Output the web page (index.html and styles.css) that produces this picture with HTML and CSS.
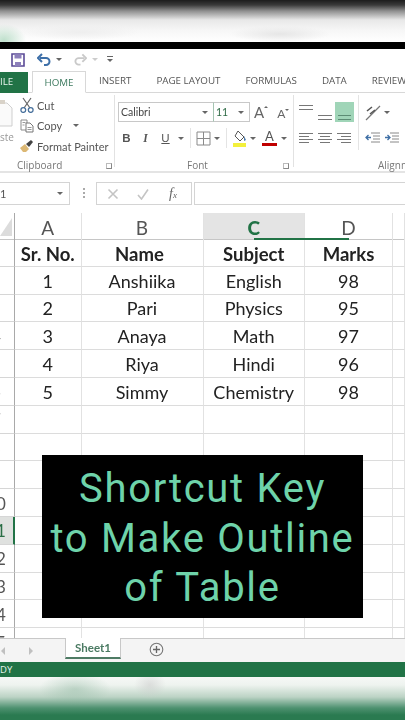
FILE: index.html
```html
<!DOCTYPE html>
<html lang="en">
<head>
<meta charset="utf-8">
<title>Shortcut Key to Make Outline of Table</title>
<link rel="stylesheet" href="styles.css">
</head>
<body>
<div class="page">
  <div class="blur-top"></div>
  <div class="black-bar"></div>
  <div class="app">
    <div class="qat">
      <svg class="q-save" width="14" height="14" viewBox="0 0 14 14"><path d="M1 1h12v12H1z" fill="none" stroke="#5a4a96" stroke-width="1.6"/><path d="M3.5 1.5h7v4h-7zM4 9h6v4H4z" fill="#8d80bb"/></svg>
      <svg class="q-undo" width="14" height="13" viewBox="0 0 14 13"><path d="M3 5h6a3.5 3.5 0 0 1 0 7H7" fill="none" stroke="#3d6fa8" stroke-width="2"/><path d="M5 1 1 5l4 4" fill="none" stroke="#3d6fa8" stroke-width="2"/></svg>
      <span class="caret q-c1"></span>
      <svg class="q-redo" width="13" height="13" viewBox="0 0 14 13"><path d="M11 5H5a3.5 3.5 0 0 0 0 7h2" fill="none" stroke="#c9c9c9" stroke-width="2"/><path d="m9 1 4 4-4 4" fill="none" stroke="#c9c9c9" stroke-width="2"/></svg>
      <span class="caret pale q-c2"></span>
      <span class="custom"></span>
    </div>
    <div class="tabs">
      <div class="file-tab">ILE</div>
      <div class="tab active">HOME</div>
      <div class="tab t-insert">INSERT</div>
      <div class="tab t-page">PAGE LAYOUT</div>
      <div class="tab t-form">FORMULAS</div>
      <div class="tab t-data">DATA</div>
      <div class="tab t-rev">REVIEW</div>
    </div>
    <div class="ribbon">
      <section class="group g-clip">
        <div class="clip-body">
          <div class="paste">
            <svg width="13" height="28" viewBox="0 0 13 28"><path d="M-3 4h10l5 5v18H-3z" fill="#fafafa" stroke="#cfcfcf"/><path d="M0 1h5v4H0z" fill="#d8d2c8"/></svg>
            <span class="paste-label">ste</span>
          </div>
          <div class="clip-cmds">
            <div class="cmd"><svg width="14" height="16" viewBox="0 0 14 16"><path d="M3 1l7 10M11 1 4 11" stroke="#666" stroke-width="1.2" fill="none"/><circle cx="3.3" cy="13" r="2.4" fill="none" stroke="#47709c" stroke-width="1.3"/><circle cx="10.7" cy="13" r="2.4" fill="none" stroke="#47709c" stroke-width="1.3"/></svg><span>Cut</span></div>
            <div class="cmd"><svg width="14" height="14" viewBox="0 0 14 14"><path d="M1 1h6v10H1z" fill="#fff" stroke="#8a8a8a"/><path d="M6 4h4l3 3v6H6z" fill="#fff" stroke="#777"/><path d="M2.5 3.5h3M2.5 6h2M7.5 8.500h4M7.500 10.500h4" stroke="#999"/></svg><span>Copy</span><span class="caret c-copy"></span></div>
            <div class="cmd"><svg width="14" height="14" viewBox="0 0 14 14"><path d="M0 9l5-4 4 5-3 3H3z" fill="#dcb874"/><path d="M6 5l5-4 2 2-4 5z" fill="#444"/></svg><span>Format Painter</span></div>
          </div>
        </div>
        <div class="g-label clip-label"><span>Clipboard</span><span class="launch"></span></div>
      </section>
      <section class="group g-font">
        <div class="font-rows">
          <div class="font-row1">
            <div class="combo c-name"><span>Calibri</span><span class="caret"></span></div>
            <div class="combo c-size"><span>11</span><span class="caret"></span></div>
            <span class="size-a big">A<i></i></span>
            <span class="size-a small">A<i class="down"></i></span>
          </div>
          <div class="font-row2">
            <b class="fmt f-b">B</b>
            <i class="fmt f-i">I</i>
            <u class="fmt f-u">U</u>
            <span class="caret f-c1"></span>
            <span class="vsep s1"></span>
            <svg class="f-border" width="15" height="15" viewBox="0 0 15 15"><path d="M1 1h13v13H1zM7.500 1v13M1 7.500h13" fill="none" stroke="#8a8a8a"/></svg>
            <span class="caret f-c2"></span>
            <span class="vsep s2"></span>
            <svg class="f-fill" width="15" height="17" viewBox="0 0 15 17"><path d="M6 1l6 6-4 4-5-5z" fill="#fff" stroke="#555"/><path d="M12 6l2 4-2 1z" fill="#4a78a8"/><path d="M1 13h13v4H1z" fill="#f3f03c"/></svg>
            <span class="caret f-c3"></span>
            <span class="color-a">A</span>
            <span class="caret f-c4"></span>
          </div>
        </div>
        <div class="g-label font-label"><span>Font</span><span class="launch"></span></div>
      </section>
      <section class="group g-align">
        <div class="align-body">
          <div class="align-grid">
            <span class="lines va-top"><i></i><i></i></span>
            <span class="lines va-mid"><i></i><i></i></span>
            <span class="lines va-bot"><i></i><i></i></span>
            <span class="lines ha"><i></i><i class="s"></i><i></i><i class="s"></i></span>
            <span class="lines ha ctr"><i></i><i class="s"></i><i></i><i class="s"></i></span>
            <span class="lines ha rgt"><i></i><i class="s"></i><i></i><i class="s"></i></span>
          </div>
          <div class="align-tools">
            <div class="orient"><svg width="16" height="17" viewBox="0 0 16 17"><path d="M1 16 15 2" stroke="#777" stroke-width="1.2"/><path d="M2 7l5-4M5 10l5-4" stroke="#555" stroke-width="1.6"/></svg><span class="caret"></span></div>
            <div class="indent">
              <svg width="15" height="12" viewBox="0 0 15 12"><path d="M6 1h9M8 4h7M8 7h7M6 10h9" stroke="#888"/><path d="M6 5.500H1M3.500 3 1 5.500 3.500 8" stroke="#3f6fa5" stroke-width="1.300" fill="none"/></svg>
              <svg width="15" height="12" viewBox="0 0 15 12"><path d="M6 1h9M8 4h7M8 7h7M6 10h9" stroke="#888"/><path d="M1 5.500h5M3.500 3 6 5.500 3.500 8" stroke="#3f6fa5" stroke-width="1.300" fill="none"/></svg>
            </div>
          </div>
        </div>
        <div class="g-label align-label">Alignm</div>
      </section>
    </div>
    <div class="formula">
      <div class="namebox"><span>1</span><span class="caret"></span></div>
      <span class="dots"></span>
      <div class="fx-box">
        <svg width="12" height="12" viewBox="0 0 12 12"><path d="M1.500 1.500l9 9M10.500 1.500l-9 9" stroke="#c4c4c4" stroke-width="1.600"/></svg>
        <svg width="12" height="12" viewBox="0 0 12 12"><path d="M1 7l3.500 4L11 1.500" stroke="#c4c4c4" stroke-width="1.600" fill="none"/></svg>
        <span class="fx">f<small>x</small></span>
      </div>
      <div class="input"></div>
    </div>
    <div class="sheet">
      <div class="row head">
        <div class="corner"><span></span></div>
        <div class="col">A</div><div class="col">B</div><div class="col sel">C</div><div class="col">D</div><div class="col"></div>
      </div>
      <div class="row titles"><div class="rh"><span>1</span></div><div>Sr. No.</div><div class="nudge">Name</div><div>Subject</div><div>Marks</div><div></div></div>
      <div class="row"><div class="rh"><span>2</span></div><div>1</div><div>Anshiika</div><div>English</div><div>98</div><div></div></div>
      <div class="row"><div class="rh"><span>3</span></div><div>2</div><div>Pari</div><div>Physics</div><div>95</div><div></div></div>
      <div class="row"><div class="rh"><span>4</span></div><div>3</div><div>Anaya</div><div>Math</div><div>97</div><div></div></div>
      <div class="row"><div class="rh"><span>5</span></div><div>4</div><div>Riya</div><div>Hindi</div><div>96</div><div></div></div>
      <div class="row"><div class="rh"><span>6</span></div><div>5</div><div>Simmy</div><div>Chemistry</div><div>98</div><div></div></div>
      <div class="row"><div class="rh"><span>7</span></div><div></div><div></div><div></div><div></div><div></div></div>
      <div class="row"><div class="rh"><span>8</span></div><div></div><div></div><div></div><div></div><div></div></div>
      <div class="row"><div class="rh"><span>9</span></div><div></div><div></div><div></div><div></div><div></div></div>
      <div class="row"><div class="rh"><span>10</span></div><div></div><div></div><div></div><div></div><div></div></div>
      <div class="row"><div class="rh cur"><span>11</span></div><div></div><div></div><div></div><div></div><div></div></div>
      <div class="row"><div class="rh"><span>12</span></div><div></div><div></div><div></div><div></div><div></div></div>
      <div class="row"><div class="rh"><span>13</span></div><div></div><div></div><div></div><div></div><div></div></div>
      <div class="row"><div class="rh"><span>14</span></div><div></div><div></div><div></div><div></div><div></div></div>
      <div class="row"><div class="rh"><span>15</span></div><div></div><div></div><div></div><div></div><div></div></div>
      <div class="green-mark"></div>
    </div>
    <div class="sheet-tabs">
      <span class="nav n1"></span>
      <span class="nav n2"></span>
      <div class="sheet-tab">Sheet1</div>
      <svg class="add" width="15" height="15" viewBox="0 0 15 15"><circle cx="7.500" cy="7.500" r="6.300" fill="none" stroke="#777" stroke-width="1.100"/><path d="M7.500 4v7M4 7.500h7" stroke="#666" stroke-width="1.300"/></svg>
    </div>
    <div class="status">DY</div>
  </div>
  <div class="blur-bottom"></div>
  <div class="title-card">Shortcut Key<br>to Make Outline<br>of Table</div>
</div>
</body>
</html>
```
FILE: styles.css
```css
* { box-sizing: border-box; }
html, body { margin: 0; padding: 0; background: #fff; }
.page {
  position: relative;
  width: 405px;
  height: 720px;
  overflow: hidden;
  display: flex;
  flex-direction: column;
  font-family: "Open Sans", "Liberation Sans", sans-serif;
  color: #444;
}
.blur-top {
  height: 42px;
  flex: none;
  background:
    radial-gradient(ellipse 22px 16px at 4px 40px, #bfe0cc 0%, rgba(255,255,255,0) 100%),
    radial-gradient(ellipse 60px 8px at 80px 32px, #eeeeee 0%, rgba(255,255,255,0) 100%),
    radial-gradient(ellipse 50px 8px at 280px 34px, #e6e6e6 0%, rgba(255,255,255,0) 100%),
    linear-gradient(#1c1c1c 0, #3a3a3a 5px, #8f8f8f 11px, #e8e8e8 20px, #f6f6f6 30px, #ffffff 42px);
}
.black-bar { height: 7px; flex: none; background: #000; }
.app { height: 628px; flex: none; display: flex; flex-direction: column; background: #fff; filter: blur(0.35px); }

/* Quick access */
.qat { height: 21px; flex: none; display: flex; align-items: center; }
.q-save { margin-left: 11px; }
.q-undo { margin-left: 12px; }
.q-c1 { margin-left: 5px; }
.q-redo { margin-left: 12px; }
.q-c2 { margin-left: 5px; }
.custom { margin-left: 9px; width: 6px; height: 7px; border-top: 1px solid #666; }
.custom::after { content: ""; display: block; margin-top: 2px; width: 0; border: 3px solid transparent; border-top-color: #666; border-bottom: 0; }
.caret { display: inline-block; width: 0; height: 0; border: 3px solid transparent; border-top-color: #666; border-bottom: 0; flex: none; }
.caret.pale { border-top-color: #ccc; }

/* Tabs */
.tabs { height: 23px; flex: none; display: flex; align-items: flex-end; border-bottom: 1px solid #d8d8d8; font-size: 9.800px; color: #555; }
.file-tab { width: 28px; height: 21px; flex: none; background: #217346; color: #e8f3ec; margin-bottom: -1px; line-height: 20px; }
.tab { height: 22px; line-height: 21px; white-space: nowrap; flex: none; }
.tab.active { width: 54px; margin-left: 4px; border: 1px solid #d8d8d8; border-bottom: 1px solid #fff; margin-bottom: -1px; text-align: center; color: #3d7a5f; background: #fff; }
.t-insert { margin-left: 13px; }
.t-page { margin-left: 25px; }
.t-form { margin-left: 25px; }
.t-data { margin-left: 25px; }
.t-rev { margin-left: 25px; }

/* Ribbon */
.ribbon { height: 80px; flex: none; display: flex; border-bottom: 2px solid #e4e4e4; }
.group { display: flex; flex-direction: column; flex: none; margin: 2px 0 4px; }
.g-clip { width: 115px; border-right: 1px solid #e2e2e2; }
.g-font { width: 179px; border-right: 1px solid #e2e2e2; }
.g-align { flex: 1; min-width: 0; }
.clip-body { flex: 1; display: flex; }
.paste { width: 20px; display: flex; flex-direction: column; padding-top: 4px; flex: none; }
.paste-label { font-size: 10px; color: #999; line-height: 14px; margin-top: 3px; }
.paste svg { display: block; }
.clip-cmds { display: flex; flex-direction: column; }
.cmd { height: 20.500px; display: flex; align-items: center; gap: 3px; font-family: "Lato", sans-serif; font-size: 11px; color: #555; white-space: nowrap; }
.c-copy { margin-left: 8px; }
.g-label { height: 15px; font-size: 10px; line-height: 15px; color: #777; flex: none; display: flex; align-items: center; margin-bottom: -6px; }
.clip-label { padding-left: 17px; gap: 44px; }
.launch { width: 6px; height: 6px; border: 1px solid #888; border-top-color: #bbb; border-left-color: #bbb; flex: none; }

/* Font group */
.font-rows { flex: 1; padding: 7px 0 0 3px; }
.font-row1 { display: flex; align-items: center; height: 20px; }
.combo { height: 20px; border: 1px solid #c8c8c8; display: flex; align-items: center; justify-content: space-between; padding: 0 5px 0 2px; font-size: 10.500px; color: #444; flex: none; font-family: "Lato", sans-serif; }
.c-name { width: 96px; }
.c-size { width: 37px; margin-left: -1px; border-left-color: #a5c5b2; color: #2d6a45; }
.size-a { font-family: "Lato", sans-serif; color: #666; display: inline-flex; align-items: flex-start; flex: none; }
.size-a i { display: block; border: 2px solid transparent; border-bottom-color: #666; border-top: 0; margin-top: 3px; }
.size-a i.down { border-bottom: 0; border-top: 2px solid #666; }
.size-a.big { font-size: 15px; margin-left: 4px; }
.size-a.small { font-size: 12px; margin-left: 9px; padding-top: 2px; }
.font-row2 { display: flex; align-items: center; height: 24px; margin-top: 4px; padding-left: 4px; }
.fmt { font-size: 11.500px; font-family: "Liberation Sans", sans-serif; color: #555; width: 9px; text-align: center; flex: none; }
.f-i { margin-left: 10px; font-family: "Liberation Serif", serif; font-weight: 700; }
.f-u { margin-left: 11px; }
.f-c1 { margin-left: 8px; }
.vsep { width: 1px; height: 20px; background: #e4e4e4; flex: none; }
.s1 { margin-left: 6px; }
.f-border { margin-left: 5px; }
.f-c2 { margin-left: 3px; }
.s2 { margin-left: 6px; }
.f-fill { margin-left: 5px; }
.f-c3 { margin-left: 3px; }
.color-a { margin-left: 6px; width: 15px; border-bottom: 3px solid #c00000; font-family: "Lato", sans-serif; font-size: 13px; line-height: 13px; text-align: center; color: #555; flex: none; }
.f-c4 { margin-left: 4px; }
.font-label { padding-left: 72px; gap: 75px; }

/* Alignment */
.align-body { flex: 1; display: flex; }
.align-grid { width: 65px; display: grid; grid-template-columns: 19px 19px 19px; grid-template-rows: 26px 20px; padding: 7px 0 0 5px; border-right: 1px solid #e4e4e4; margin-bottom: 8px; flex: none; }
.lines { display: flex; flex-direction: column; gap: 2px; width: 14px; align-items: flex-start; justify-content: center; }
.lines i { display: block; width: 14px; height: 1px; background: #777; }
.lines i.s { width: 10px; }
.lines.ctr { align-items: center; }
.lines.rgt { align-items: flex-end; }
.va-top { justify-content: flex-start; padding-top: 3px; gap: 3px; }
.va-mid { justify-content: center; padding-top: 5px; gap: 3px; }
.va-bot { width: 19px; margin-left: -2px; height: 20px; justify-content: flex-end; padding: 0 3px 2px; gap: 3px; background: #a0d5b8; }
.va-bot i { width: 13px; background: #5c8c74; }
.align-tools { display: flex; flex-direction: column; padding: 7px 0 0 6px; }
.orient { display: flex; align-items: center; gap: 3px; height: 20px; }
.indent { display: flex; gap: 4px; margin-top: 10px; }
.align-label { padding-left: 84px; white-space: nowrap; }

/* Formula bar */
.formula { height: 40px; flex: none; display: flex; padding-top: 9px; align-items: flex-start; }
.namebox { width: 70px; height: 23px; border: 1px solid #d4d4d4; border-left: 0; display: flex; align-items: center; justify-content: space-between; padding: 0 6px 0 0; font-size: 11px; color: #555; flex: none; font-family: "Lato", sans-serif; }
.dots { width: 2px; height: 10px; margin: 6px 0 0 13px; background: repeating-linear-gradient(#aaa 0 2px, transparent 2px 4px); flex: none; }
.fx-box { width: 96px; height: 23px; margin-left: 11px; border: 1px solid #d4d4d4; display: flex; align-items: center; padding-left: 10px; flex: none; }
.fx-box svg + svg { margin-left: 18px; }
.fx { margin-left: 20px; font-family: "Liberation Serif", serif; font-style: italic; font-size: 14px; color: #666; }
.fx small { font-size: 9px; }
.input { flex: 1; height: 23px; margin-left: 2px; border: 1px solid #d4d4d4; border-right: 0; }

/* Sheet */
.sheet { position: relative; height: 425px; flex: none; overflow: hidden; font-family: "Lato", sans-serif; font-size: 18px; color: #222; }
.row { display: grid; grid-template-columns: 15px 66.500px 122px 101.500px 88px 1fr; height: 27.800px; }
.row > div { border-right: 1px solid #e2e2e2; border-bottom: 1px solid #dcdcdc; display: flex; align-items: center; justify-content: center; white-space: nowrap; min-width: 0; padding-top: 1px; }
.titles { font-weight: 700; font-size: 18.500px; }
.row.titles > div { padding-top: 4px; }
.row.titles > .nudge { padding-right: 5px; }
.row.titles > .rh { padding-top: 1px; font-weight: 400; }
.row.head { height: 26px; }
.row.head > div { border-bottom: 1px solid #c6c6c6; padding-top: 3px; }
.col { font-size: 19px; color: #555; font-weight: 400; border-right-color: #e6e6e6; }
.col.sel { background: #e4e4e4; color: #217346; font-weight: 900; }
.row.head > .corner { background: #fff; border-right: 1px solid #a9a9a9; justify-content: flex-end; align-items: flex-end; padding-top: 0; }
.corner span { width: 0; height: 0; border-left: 12px solid transparent; border-bottom: 18px solid #dcdcdc; margin: 0 2px 3px 0; }
.row > .rh { border-right: 1px solid #a9a9a9; border-bottom-color: #d6d6d6; justify-content: flex-start; overflow: hidden; color: #555; font-size: 17px; }
.rh span { width: 22px; margin-left: -15px; flex: none; text-align: center; }
.row > .rh.cur { background: #dfe1df; color: #2a6e45; border-right: 2px solid #217346; }
.green-mark { position: absolute; left: 254px; top: 25px; width: 95px; height: 1.500px; background: #217346; }

/* Sheet tabs */
.sheet-tabs { height: 24px; flex: none; background: #f4f4f4; border-top: 1px solid #c8c8c8; display: flex; align-items: flex-start; }
.nav { width: 0; height: 0; border: 4px solid transparent; border-right-color: #c0c0c0; border-left: 0; margin-top: 8px; flex: none; }
.n1 { margin-left: 1px; }
.n2 { margin-left: 24px; transform: scaleX(-1); }
.sheet-tab { width: 56px; height: 21px; margin: -1px 0 0 32px; background: #fff; border: 1px solid #c8c8c8; border-top: 0; border-bottom: 2px solid #4e7b64; text-align: center; font-family: "Lato", sans-serif; font-weight: 700; font-size: 11.500px; line-height: 20px; color: #4a7a62; flex: none; }
.add { margin: 3px 0 0 28px; flex: none; }
.status { height: 15px; flex: none; background: #217346; color: #e9f3ed; font-size: 9.500px; line-height: 15px; }

.blur-bottom {
  flex: 1;
  background:
    radial-gradient(ellipse 36px 16px at 75px 12px, rgba(130,175,150,.4) 0%, rgba(255,255,255,0) 100%),
    radial-gradient(ellipse 16px 14px at 150px 8px, rgba(200,200,200,.5) 0%, rgba(255,255,255,0) 100%),
    linear-gradient(#f6f8f6 0, #eef3ef 8px, #bcd3c5 20px, #4e9170 31px, #2a7a50 38px, #2a7a50 43px);
}

/* Title overlay */
.title-card {
  position: absolute;
  left: 42px;
  top: 455px;
  width: 321px;
  height: 163px;
  background: #000;
  color: #6ed3aa;
  font-family: "Roboto", "Liberation Sans", sans-serif;
  font-weight: 400;
  font-size: 40px;
  line-height: 49.500px;
  letter-spacing: 1.700px;
  text-align: center;
  padding-top: 9px;
  white-space: nowrap;
}
```
